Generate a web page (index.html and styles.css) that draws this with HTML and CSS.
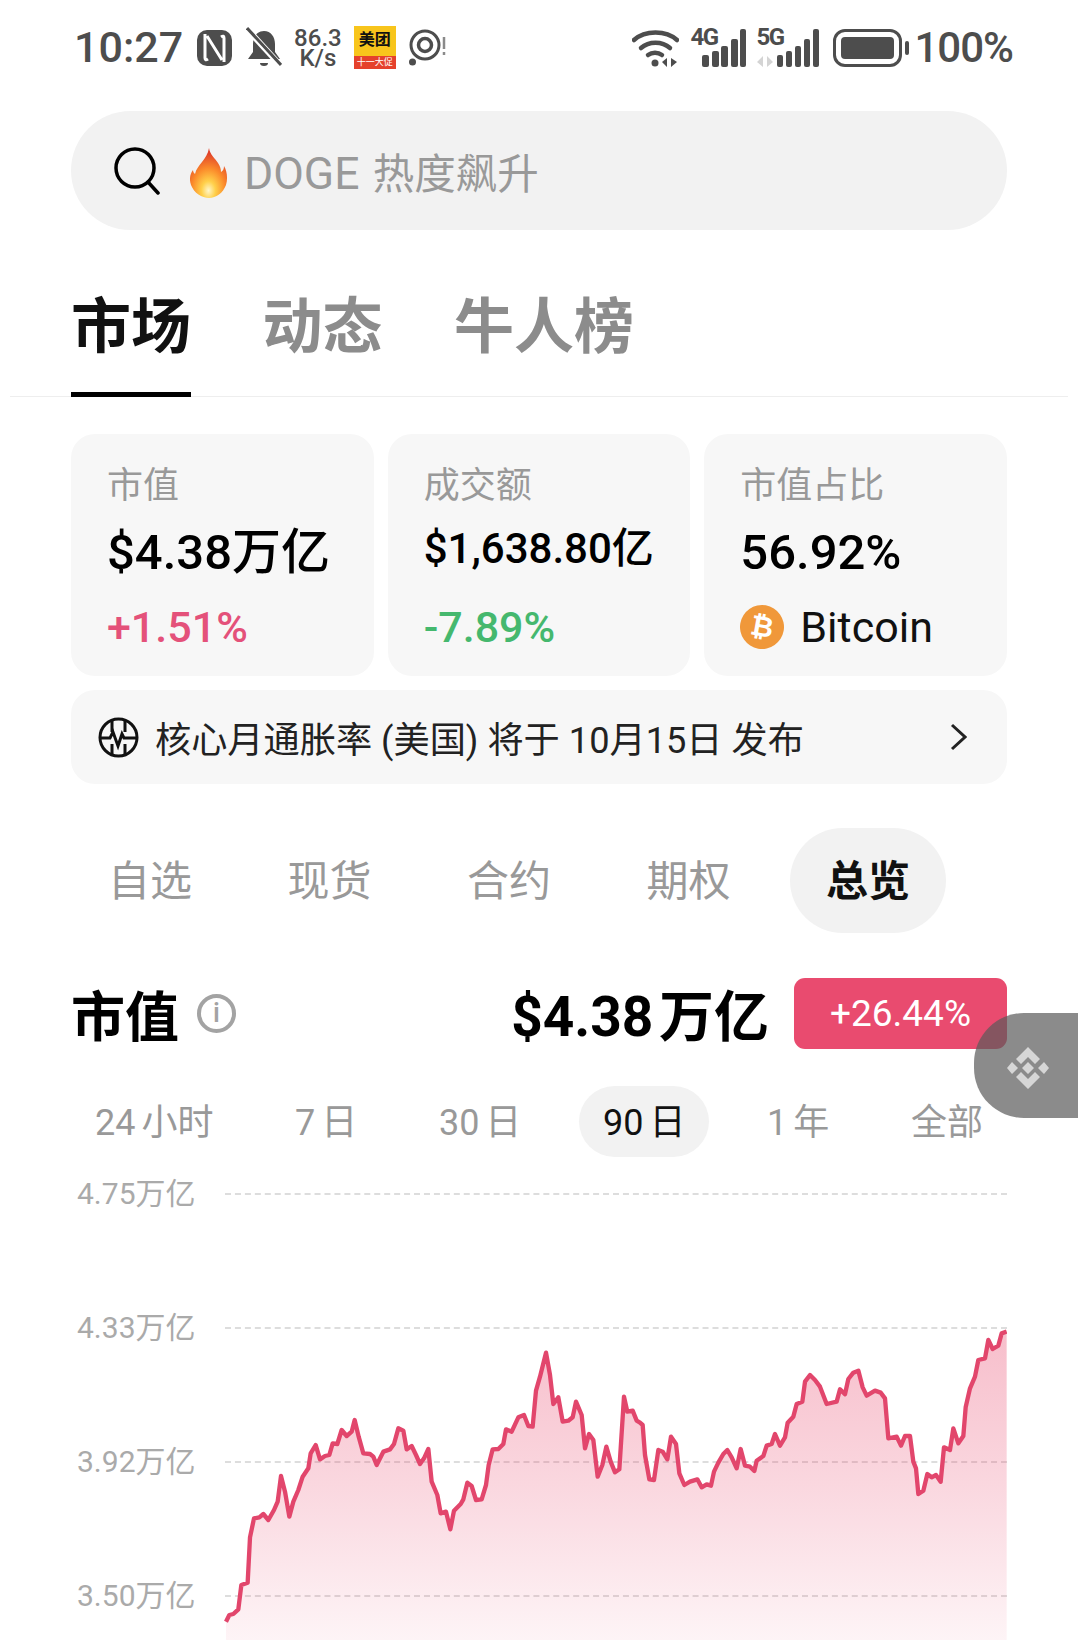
FILE: index.html
```html
<!DOCTYPE html>
<html lang="zh-CN">
<head>
    <meta charset="UTF-8">
    <meta name="viewport" content="width=device-width, initial-scale=1.0">
    <title>市场</title>
    <link rel="stylesheet" href="styles.css">
</head>
<body>
    <div class="page">
        <!-- Status bar -->
        <div class="status-bar">
            <div class="status-left">
                <span class="clock">10:27</span>
                <svg class="nfc-icon" width="35" height="36" viewBox="0 0 35 36">
                    <rect width="35" height="36" rx="10" fill="#4d4d4d"/>
                    <path d="M8 4v24q0 3 3 1M27 32V8q0-3-3-1M10 6l15 24" fill="none" stroke="#fff" stroke-width="3"/>
                </svg>
                <svg class="bell-icon" width="36" height="42" viewBox="0 0 36 42">
                    <path d="M18 4c7 0 11 6 11 13v8l5 7H2l5-7v-8C7 10 11 4 18 4z" fill="#4d4d4d"/>
                    <path d="M14 36h8a4 3 0 0 1-8 0z" fill="#4d4d4d"/>
                    <path d="M2 3l33 36" stroke="#fff" stroke-width="6"/>
                    <path d="M1 1l34 37" stroke="#4d4d4d" stroke-width="3"/>
                </svg>
                <div class="net-speed">86.3<br>K/s</div>
                <div class="meituan">
                    <span class="meituan-top">美团</span>
                    <span class="meituan-bottom">十一大促</span>
                </div>
                <svg class="target-icon" width="38" height="38" viewBox="0 0 38 38">
                    <circle cx="16" cy="16" r="14" fill="none" stroke="#4d4d4d" stroke-width="3"/>
                    <circle cx="16" cy="16" r="6.5" fill="none" stroke="#4d4d4d" stroke-width="3.5"/>
                    <circle cx="3.500" cy="33" r="3.500" fill="#4d4d4d"/>
                    <path d="M35 8v12M35 23v3" stroke="#8a8a8a" stroke-width="2.500"/>
                </svg>
            </div>
            <div class="status-right">
                <svg class="wifi-icon" width="47" height="38" viewBox="0 0 47 38">
                    <g fill="none" stroke="#4d4d4d" stroke-width="4.500" stroke-linecap="round">
                        <path d="M2 11C13 1 34 1 45 11"/>
                        <path d="M9 19c8-7 21-7 29 0"/>
                        <path d="M16 26c4-3 10-3 14 0"/>
                    </g>
                    <circle cx="23" cy="34" r="3.500" fill="#4d4d4d"/>
                    <path d="M35 29v9l-5-5zM39 29v9l6-5z" fill="#4d4d4d"/>
                </svg>
                <div class="signal">
                    <span class="signal-label">4G</span>
                    <svg width="44" height="38" viewBox="0 0 44 38">
                        <rect x="0" y="26" width="7" height="12" rx="2"/>
                        <rect x="10" y="22" width="7" height="16" rx="2"/>
                        <rect x="19" y="17" width="7" height="21" rx="2"/>
                        <rect x="29" y="10" width="7" height="28" rx="2"/>
                        <rect x="38" y="0" width="6" height="38" rx="2"/>
                    </svg>
                </div>
                <div class="signal">
                    <span class="signal-label">5G</span>
                    <svg width="62" height="38" viewBox="0 0 62 38">
                        <path d="M6 27v11l-6-5zM10 27v11l6-5z" fill="#d4d4d4"/>
                        <rect x="20" y="26" width="6" height="12" rx="2"/>
                        <rect x="29" y="22" width="6" height="16" rx="2"/>
                        <rect x="38" y="17" width="6" height="21" rx="2"/>
                        <rect x="47" y="10" width="6" height="28" rx="2"/>
                        <rect x="56" y="0" width="6" height="38" rx="2"/>
                    </svg>
                </div>
                <div class="battery">
                    <div class="battery-body"><div class="battery-fill"></div></div>
                    <div class="battery-nub"></div>
                </div>
                <span class="battery-text">100%</span>
            </div>
        </div>

        <!-- Search -->
        <div class="search-bar">
            <svg class="search-icon" width="46" height="48" viewBox="0 0 46 48">
                <circle cx="21" cy="21" r="19" fill="none" stroke="#000" stroke-width="3.500"/>
                <path d="M34 35l10 11" stroke="#000" stroke-width="3.500" stroke-linecap="round"/>
            </svg>
            <svg class="flame-icon" width="38" height="50" viewBox="0 0 38 50">
                <defs>
                    <radialGradient id="flameFill" cx="50%" cy="85%" r="75%">
                        <stop offset="0" stop-color="#fff6c8"/>
                        <stop offset="0.25" stop-color="#ffd04a"/>
                        <stop offset="0.6" stop-color="#fb8a2a"/>
                        <stop offset="1" stop-color="#e0412a"/>
                    </radialGradient>
                </defs>
                <path d="M19 0c1 7 6 10 9 15 2 3 3 6 3 9 2-1 3-3 3-6 3 5 4 12 2 19-3 8-10 13-17 13S4 45 1 37c-2-6-1-11 2-15 0 2 1 3 2 4 1-5 4-8 7-12 3-4 6-8 7-14z" fill="url(#flameFill)"/>
            </svg>
            <span class="search-text"><span class="search-coin">DOGE</span> 热度飙升</span>
        </div>

        <!-- Main tabs -->
        <div class="main-tabs">
            <div class="main-tab active">市场</div>
            <div class="main-tab">动态</div>
            <div class="main-tab">牛人榜</div>
        </div>

        <!-- Market cards -->
        <div class="cards">
            <div class="card">
                <div class="card-label">市值</div>
                <div class="card-value">$4.38万亿</div>
                <div class="card-change up">+1.51%</div>
            </div>
            <div class="card">
                <div class="card-label">成交额</div>
                <div class="card-value small">$1,638.80亿</div>
                <div class="card-change down">-7.89%</div>
            </div>
            <div class="card">
                <div class="card-label">市值占比</div>
                <div class="card-value">56.92%</div>
                <div class="card-coin">
                    <span class="btc-icon">₿</span>
                    <span>Bitcoin</span>
                </div>
            </div>
        </div>

        <div class="notice">
            <svg class="notice-icon" width="41" height="41" viewBox="0 0 41 41">
                <g fill="none" stroke="#111" stroke-width="3">
                    <circle cx="20.500" cy="20.500" r="18.500"/>
                    <path d="M14 3v12M27 3v12M14 27v11M27 27v11"/>
                    <path d="M2 21h10l3-6 5 14 4-12 2 4h13"/>
                </g>
            </svg>
            <span class="notice-text">核心月通胀率 (美国) 将于 10月15日 发布</span>
            <svg class="chevron" width="17" height="28" viewBox="0 0 17 28">
                <path d="M2 2l13 12L2 26" fill="none" stroke="#222" stroke-width="3"/>
            </svg>
        </div>

        <!-- Instrument tabs -->
        <div class="type-tabs">
            <div class="type-tab">自选</div>
            <div class="type-tab">现货</div>
            <div class="type-tab">合约</div>
            <div class="type-tab">期权</div>
            <div class="type-tab active">总览</div>
        </div>

        <div class="title-row">
            <div class="title-left">
                <span class="title">市值</span>
                <span class="info-icon">i</span>
            </div>
            <div class="title-right">
                <span class="title-value">$4.38 万亿</span>
                <span class="title-badge">+26.44%</span>
            </div>
        </div>

        <div class="range-tabs">
            <div class="range-tab">24 小时</div>
            <div class="range-tab">7 日</div>
            <div class="range-tab">30 日</div>
            <div class="range-tab active">90 日</div>
            <div class="range-tab">1 年</div>
            <div class="range-tab">全部</div>
        </div>

        <!-- Chart -->
        <div class="chart">
            <div class="chart-row"><span class="chart-label">4.75万亿</span><span class="chart-line"></span></div>
            <div class="chart-row"><span class="chart-label">4.33万亿</span><span class="chart-line"></span></div>
            <div class="chart-row"><span class="chart-label">3.92万亿</span><span class="chart-line"></span></div>
            <div class="chart-row"><span class="chart-label">3.50万亿</span><span class="chart-line"></span></div>
            <svg class="chart-plot" width="878" height="340" viewBox="0 0 2634 1020">
                <defs>
                    <linearGradient id="areaFill" x1="0" y1="0" x2="0" y2="1">
                        <stop offset="0" stop-color="#e94b6f" stop-opacity="0.36"/>
                        <stop offset="0.5" stop-color="#e94b6f" stop-opacity="0.22"/>
                        <stop offset="1" stop-color="#e94b6f" stop-opacity="0.06"/>
                    </linearGradient>
                </defs>
                <path id="area" fill="url(#areaFill)" d="M78 1020V965L88 945 100 942 115 928 124 855 143 848 150 712 162 655 178 652 190 642 205 660 222 630 233 605 243 528 255 575 268 650 280 605 295 570 308 530 325 505 332 460 347 435 360 478 375 468 388 465 398 430 412 432 425 390 440 408 455 395 464 360 476 410 490 460 510 462 520 470 530 495 550 455 570 448 582 432 595 385 610 392 620 448 635 438 648 465 660 492 672 475 685 447 695 545 712 585 722 640 738 635 751 688 762 632 782 612 790 598 802 548 815 558 828 600 845 598 858 555 866 495 878 448 895 447 910 432 918 388 935 395 955 352 972 345 985 378 998 380 1008 272 1020 230 1038 158 1050 225 1060 312 1075 292 1088 365 1105 362 1118 352 1128 305 1145 345 1155 445 1167 402 1180 420 1193 530 1207 495 1219 440 1232 485 1245 517 1258 508 1272 290 1282 335 1298 332 1310 362 1320 368 1328 375 1335 465 1348 538 1362 540 1375 450 1388 455 1402 478 1413 410 1428 432 1438 520 1453 555 1470 545 1492 538 1505 562 1520 553 1533 557 1542 515 1555 488 1570 462 1582 450 1595 472 1610 505 1622 447 1635 497 1650 500 1663 513 1670 482 1690 468 1700 437 1715 432 1725 402 1740 437 1755 412 1763 368 1780 350 1790 312 1807 305 1815 245 1830 225 1845 240 1860 260 1880 312 1910 305 1920 268 1935 283 1945 237 1960 218 1975 212 1988 262 2000 287 2025 272 2042 278 2055 295 2065 415 2090 410 2103 437 2115 408 2130 408 2140 485 2148 505 2155 582 2170 572 2182 522 2195 532 2208 525 2222 545 2232 442 2250 450 2260 385 2275 430 2290 408 2297 322 2310 265 2325 230 2335 180 2355 175 2365 120 2378 147 2395 137 2405 100 2420 95V1020Z"/>
                <path fill="none" stroke="#e2466c" stroke-width="13" stroke-linejoin="round" d="M78 965L88 945 100 942 115 928 124 855 143 848 150 712 162 655 178 652 190 642 205 660 222 630 233 605 243 528 255 575 268 650 280 605 295 570 308 530 325 505 332 460 347 435 360 478 375 468 388 465 398 430 412 432 425 390 440 408 455 395 464 360 476 410 490 460 510 462 520 470 530 495 550 455 570 448 582 432 595 385 610 392 620 448 635 438 648 465 660 492 672 475 685 447 695 545 712 585 722 640 738 635 751 688 762 632 782 612 790 598 802 548 815 558 828 600 845 598 858 555 866 495 878 448 895 447 910 432 918 388 935 395 955 352 972 345 985 378 998 380 1008 272 1020 230 1038 158 1050 225 1060 312 1075 292 1088 365 1105 362 1118 352 1128 305 1145 345 1155 445 1167 402 1180 420 1193 530 1207 495 1219 440 1232 485 1245 517 1258 508 1272 290 1282 335 1298 332 1310 362 1320 368 1328 375 1335 465 1348 538 1362 540 1375 450 1388 455 1402 478 1413 410 1428 432 1438 520 1453 555 1470 545 1492 538 1505 562 1520 553 1533 557 1542 515 1555 488 1570 462 1582 450 1595 472 1610 505 1622 447 1635 497 1650 500 1663 513 1670 482 1690 468 1700 437 1715 432 1725 402 1740 437 1755 412 1763 368 1780 350 1790 312 1807 305 1815 245 1830 225 1845 240 1860 260 1880 312 1910 305 1920 268 1935 283 1945 237 1960 218 1975 212 1988 262 2000 287 2025 272 2042 278 2055 295 2065 415 2090 410 2103 437 2115 408 2130 408 2140 485 2148 505 2155 582 2170 572 2182 522 2195 532 2208 525 2222 545 2232 442 2250 450 2260 385 2275 430 2290 408 2297 322 2310 265 2325 230 2335 180 2355 175 2365 120 2378 147 2395 137 2405 100 2420 95"/>
            </svg>
        </div>

        <!-- Floating button -->
        <div class="float-button">
            <svg width="42" height="42" viewBox="0 0 42 42">
                <g fill="#d6d6d6">
                    <path d="M21 0l12 12-5 5-7-7-7 7-5-5zM21 42L9 30l5-5 7 7 7-7 5 5zM21 15l6 6-6 6-6-6zM5 15l6 6-6 6-5-6zM37 15l5 6-5 6-6-6z"/>
                </g>
            </svg>
        </div>
    </div>
</body>
</html>
```

FILE: styles.css
```css
* {
    box-sizing: border-box;
}
body {
    margin: 0;
    background: white;
    font-family: Roboto, 'Noto Sans CJK SC', sans-serif;
    color: #000;
}
.page {
    position: relative;
    height: 1640px;
    overflow: hidden;
    padding-top: 26px;
}
.status-bar {
    display: flex;
    justify-content: space-between;
    align-items: center;
    height: 43px;
    padding: 0 65px 0 74px;
    color: #4d4d4d;
}
.status-left, .status-right {
    display: flex;
    align-items: center;
}
.clock {
    font-size: 43px;
    font-weight: 500;
    line-height: 43px;
    margin-right: 14px;
}
.bell-icon {
    margin-left: 14px;
}
.net-speed {
    margin-left: 12px;
    font-size: 24px;
    font-weight: 500;
    line-height: 20px;
    text-align: center;
}
.meituan {
    display: flex;
    flex-direction: column;
    width: 42px;
    height: 43px;
    margin-left: 12px;
    text-align: center;
}
.meituan-top {
    height: 30px;
    background: #f8c51c;
    color: #111;
    font-size: 16px;
    font-weight: 700;
    line-height: 28px;
}
.meituan-bottom {
    height: 13px;
    background: #e5412c;
    color: #fff;
    font-size: 9px;
    line-height: 13px;
    white-space: nowrap;
}
.target-icon {
    margin-left: 13px;
}
.status-right svg {
    fill: #4d4d4d;
}
.signal {
    position: relative;
    margin-left: 11px;
    padding-left: 12px;
}
.signal + .signal {
    margin-left: 10px;
    padding-left: 1px;
}
.signal svg {
    display: block;
}
.signal-label {
    position: absolute;
    left: 0;
    top: -4px;
    font-size: 24px;
    font-weight: 700;
    line-height: 24px;
    letter-spacing: -1.5px;
}
.battery {
    display: flex;
    align-items: center;
    margin-left: 14px;
}
.battery-body {
    width: 69px;
    height: 38px;
    padding: 5px;
    border: 3px solid #4d4d4d;
    border-radius: 12px;
}
.battery-fill {
    height: 100%;
    background: #4d4d4d;
    border-radius: 4px;
}
.battery-nub {
    width: 4px;
    height: 14px;
    margin-left: 3px;
    background: #4d4d4d;
    border-radius: 2px;
}
.battery-text {
    margin-left: 5px;
    font-size: 42px;
    font-weight: 500;
    line-height: 43px;
    letter-spacing: -1px;
}
.search-bar {
    display: flex;
    align-items: center;
    height: 119px;
    margin: 42px 71px 0;
    padding-left: 43px;
    background: #f2f2f2;
    border-radius: 60px;
}
.flame-icon {
    margin: 4px 0 0 30px;
}
.search-text {
    margin-left: 16px;
    font-size: 41.500px;
    color: #999;
    word-spacing: 3px;
}
.search-coin {
    font-size: 44.500px;
}
.main-tabs {
    display: flex;
    gap: 71.5px;
    height: 107px;
    margin: 60px 10px 0;
    padding: 0 61px;
    border-bottom: 1px solid #eee;
}
.main-tab {
    height: 107px;
    font-size: 60px;
    font-weight: 700;
    line-height: 76px;
    color: #8c8c8c;
}
.main-tab.active {
    color: #111;
    border-bottom: 5px solid #000;
}
.cards {
    display: grid;
    grid-template-columns: repeat(3, 1fr);
    gap: 14px;
    margin: 37px 71px 0;
}
.card {
    height: 242px;
    padding: 30px 0 0 36px;
    background: #f7f7f7;
    border-radius: 24px;
}
.card-label {
    font-size: 36px;
    line-height: 44px;
    color: #999;
}
.card-value {
    margin-top: 16px;
    font-size: 49px;
    font-weight: 500;
    line-height: 58px;
    white-space: nowrap;
}
.card-value.small {
    margin-top: 12px;
    padding-bottom: 4px;
    font-size: 42px;
}
.card-change, .card-coin {
    margin-top: 20px;
    font-size: 43px;
    font-weight: 500;
    line-height: 50px;
}
.card-change.up {
    color: #e4517a;
}
.card-change.down {
    color: #45b86e;
}
.card-coin {
    display: flex;
    align-items: center;
    gap: 16px;
    color: #111;
    font-weight: 400;
}
.btc-icon {
    width: 44px;
    height: 44px;
    background: #f0983a;
    border-radius: 50%;
    color: #fff;
    font-family: 'DejaVu Sans', sans-serif;
    font-size: 28px;
    font-weight: 700;
    line-height: 44px;
    text-align: center;
    transform: rotate(10deg);
}
.notice {
    display: flex;
    align-items: center;
    height: 94px;
    margin: 14px 71px 0;
    padding: 0 40px 0 27px;
    background: #f7f7f7;
    border-radius: 24px;
}
.notice-text {
    flex: 1;
    margin-left: 16px;
    font-size: 36.200px;
    color: #222;
    white-space: nowrap;
}
.type-tabs {
    display: flex;
    gap: 23.5px;
    margin: 44px 71px 0 72px;
}
.type-tab {
    width: 156px;
    height: 105px;
    border-radius: 53px;
    font-size: 42px;
    line-height: 107px;
    text-align: center;
    color: #999;
}
.type-tab.active {
    background: #f2f2f2;
    color: #111;
    font-weight: 700;
}
.title-row {
    display: flex;
    justify-content: space-between;
    align-items: center;
    height: 71px;
    margin: 45px 71px 0;
}
.title-left, .title-right {
    display: flex;
    align-items: center;
}
.title {
    font-size: 54px;
    font-weight: 700;
}
.info-icon {
    width: 39px;
    height: 39px;
    margin-left: 18px;
    border: 4px solid #a3a3a3;
    border-radius: 50%;
    color: #a3a3a3;
    font-size: 27px;
    font-weight: 500;
    line-height: 31px;
    text-align: center;
}
.title-value {
    margin-bottom: 4px;
    font-size: 55px;
    font-weight: 700;
    word-spacing: -8px;
}
.title-badge {
    width: 213px;
    height: 71px;
    margin-left: 25px;
    background: #e94b6f;
    border-radius: 11px;
    color: white;
    font-size: 37px;
    line-height: 71px;
    text-align: center;
}
.range-tabs {
    display: flex;
    justify-content: space-between;
    margin: 37px 71px 0;
}
.range-tab {
    height: 71px;
    padding: 0 24px;
    border-radius: 36px;
    font-size: 36px;
    line-height: 74px;
    color: #999;
    white-space: nowrap;
    word-spacing: -3px;
}
.range-tab.active {
    background: #f2f2f2;
    color: #111;
}
.chart {
    position: relative;
    display: flex;
    flex-direction: column;
    gap: 94px;
    height: 466px;
    margin: 17px 71px 0;
    overflow: hidden;
}
.chart-row {
    display: flex;
    align-items: center;
    height: 40px;
    padding-left: 6px;
    flex-shrink: 0;
}
.chart-label {
    width: 148px;
    margin-bottom: 6px;
    font-size: 30px;
    color: #aaa;
    white-space: nowrap;
}
.chart-line {
    flex: 1;
    border-top: 2px dashed #ddd;
}
.chart-plot {
    position: absolute;
    left: 129px;
    top: 126px;
}
.float-button {
    position: absolute;
    right: 0;
    top: 1013px;
    display: flex;
    align-items: center;
    justify-content: center;
    width: 104px;
    height: 105px;
    padding: 4px 0 0 4px;
    background: rgba(90, 90, 90, 0.7);
    border-radius: 50px 0 0 50px;
}
```
